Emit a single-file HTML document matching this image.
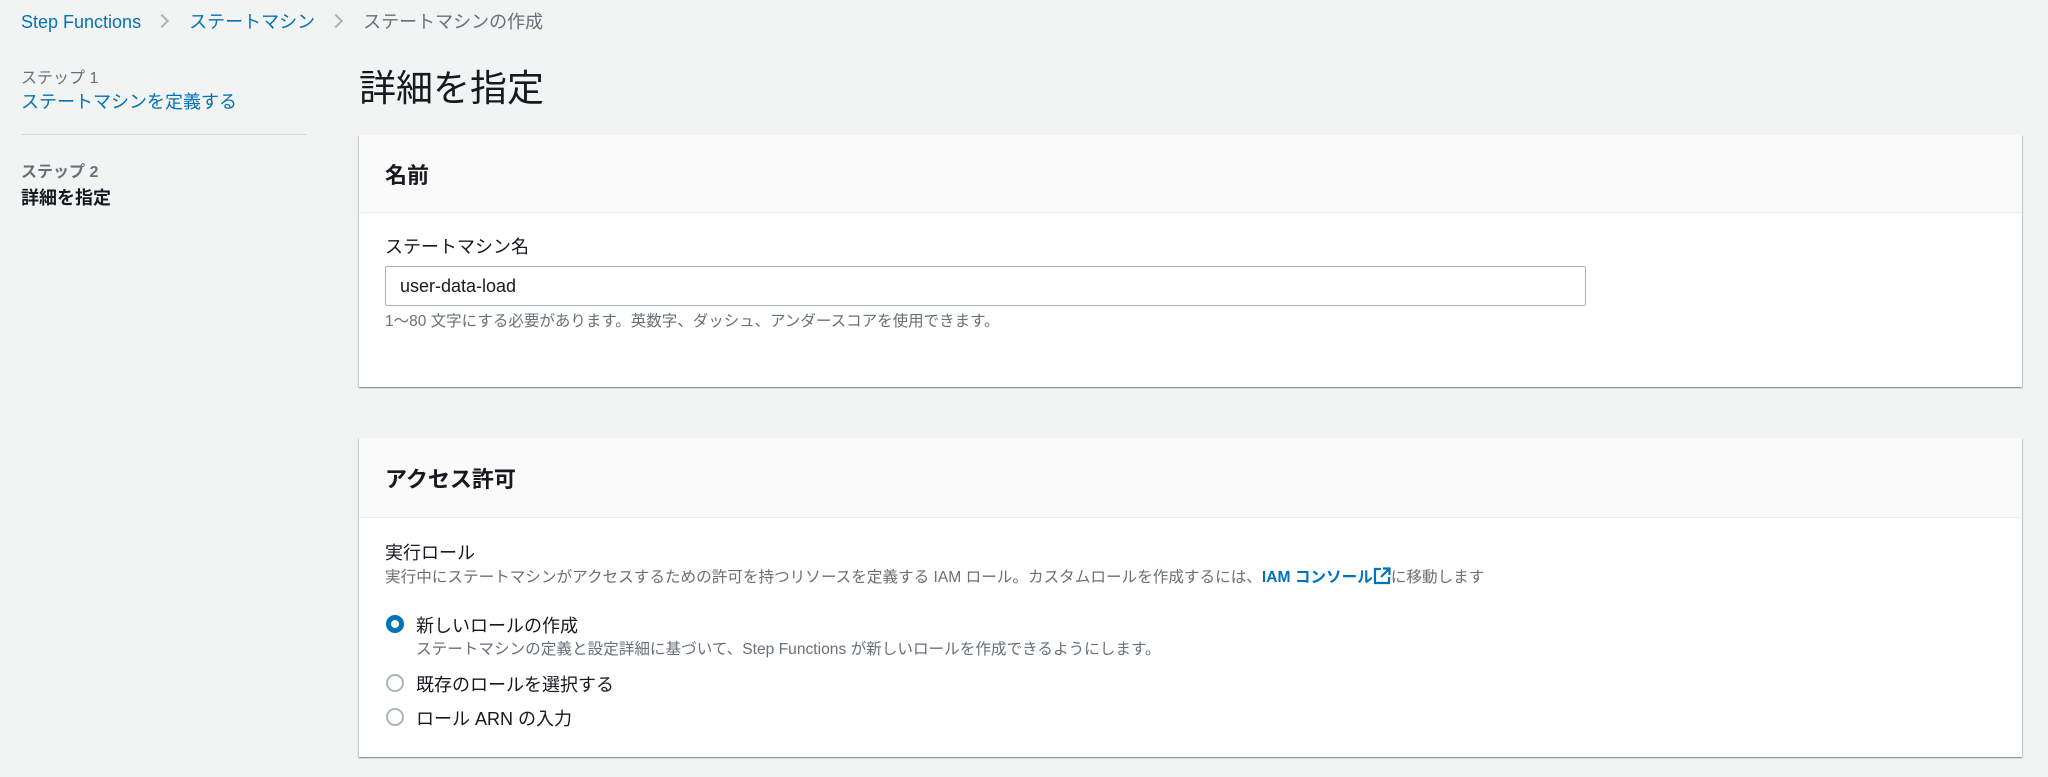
<!DOCTYPE html>
<html><head><meta charset="utf-8"><style>
*{box-sizing:border-box;margin:0;padding:0}
body{width:2048px;height:777px;overflow:hidden;background:#f2f3f3;font-family:"Liberation Sans","Noto Sans CJK JP",sans-serif;color:#16191f;position:relative}
.a{position:absolute;white-space:nowrap}
.link{color:#0073bb}
.gray{color:#687078}
.panel{position:absolute;left:359px;width:1663px;background:#fff;box-shadow:0 1px 1px rgba(0,28,36,.3),1px 1px 1px rgba(0,28,36,.15),-1px 1px 1px rgba(0,28,36,.15);}
.ph{background:#fafafa;border-bottom:1px solid #eaeded;height:78px;padding-left:26px;display:flex;align-items:center;font-size:22px;font-weight:bold}
.radio{position:absolute;width:18px;height:18px;border-radius:50%;border:2px solid #aab7b8;background:#fff}
.radio.on{border:5px solid #0073bb}
.chev{display:inline-block;width:10px;height:10px;border-right:2px solid #aab7b8;border-top:2px solid #aab7b8;transform:rotate(45deg);margin:0 22px 2px 16px}
</style></head><body>
<div class="a" style="left:21px;top:10px;font-size:18px;line-height:24px"><span class="link">Step Functions</span><span class="chev"></span><span class="link">ステートマシン</span><span class="chev"></span><span class="gray">ステートマシンの作成</span></div>
<div class="a gray" style="left:21px;top:64px;font-size:16px">ステップ 1</div>
<div class="a link" style="left:21px;top:88px;font-size:18px">ステートマシンを定義する</div>
<div class="a" style="left:21px;top:134px;width:286px;height:1px;background:#d5dbdb"></div>
<div class="a gray" style="left:21px;top:158px;font-size:16px;font-weight:bold">ステップ 2</div>
<div class="a" style="left:21px;top:184px;font-size:18px;font-weight:bold">詳細を指定</div>
<div class="a" style="left:359px;top:66px;font-size:37px;line-height:46px">詳細を指定</div>

<div class="panel" style="top:135px;height:252px">
<div class="ph">名前</div>
<div class="a" style="left:26px;top:98px;font-size:18px">ステートマシン名</div>
<div class="a" style="left:26px;top:131px;width:1201px;height:40px;border:1px solid #aab7b8;border-radius:2px;padding-left:14px;line-height:38px;font-size:18px">user-data-load</div>
<div class="a gray" style="left:26px;top:177px;font-size:15.5px;line-height:20px">1〜80 文字にする必要があります。英数字、ダッシュ、アンダースコアを使用できます。</div>
</div>

<div class="panel" style="top:438px;height:319px">
<div class="ph" style="height:80px">アクセス許可</div>
<div class="a" style="left:26px;top:101px;font-size:18px">実行ロール</div>
<div class="a gray" style="left:26px;top:129px;font-size:15.6px;line-height:20px">実行中にステートマシンがアクセスするための許可を持つリソースを定義する IAM ロール。カスタムロールを作成するには、<b class="link">IAM コンソール</b><svg width="18" height="18" viewBox="0 0 18 18" style="vertical-align:-3px"><path d="M8 2H2v14h14v-6" fill="none" stroke="#0073bb" stroke-width="2.2"/><path d="M10 1.5h6.5V8M16.5 1.5L8 10" fill="none" stroke="#0073bb" stroke-width="2.2"/></svg>に移動します</div>
<div class="radio on" style="left:27px;top:177px"></div>
<div class="a" style="left:57px;top:174px;font-size:18px">新しいロールの作成</div>
<div class="a gray" style="left:57px;top:199px;font-size:15.6px">ステートマシンの定義と設定詳細に基づいて、Step Functions が新しいロールを作成できるようにします。</div>
<div class="radio" style="left:27px;top:236px"></div>
<div class="a" style="left:57px;top:233px;font-size:18px">既存のロールを選択する</div>
<div class="radio" style="left:27px;top:270px"></div>
<div class="a" style="left:57px;top:267px;font-size:18px">ロール ARN の入力</div>
</div>
</body></html>
